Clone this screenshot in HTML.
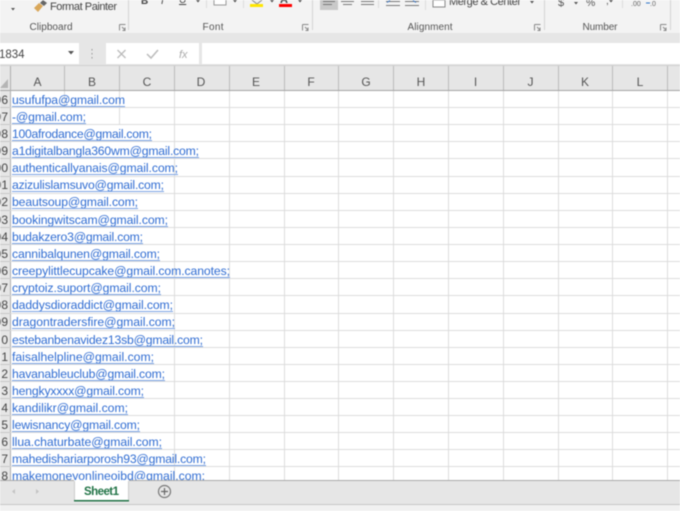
<!DOCTYPE html>
<html><head><meta charset="utf-8"><style>
html,body{margin:0;padding:0;width:680px;height:511px;overflow:hidden;background:#fff}
svg{display:block;filter:blur(.45px)}
text{font-family:"Liberation Sans",sans-serif}
.m{fill:#2f6cd2;font-size:12.2px}
.h{fill:#555;font-size:12px;text-anchor:middle}
.r{fill:#444;font-size:12px;text-anchor:end}
.l{fill:#555;font-size:10px;text-anchor:middle}
.u{stroke:#7ba3e4;stroke-width:1}
.g{stroke:#dcdcdc;stroke-width:1}
.t{stroke:#888;stroke-width:1;fill:none}
</style></head><body>
<svg xmlns="http://www.w3.org/2000/svg" width="680" height="511" viewBox="0 0 680 511">
<rect width="680" height="511" fill="#fff"/>
<!-- ribbon -->
<rect width="680" height="33" fill="#f3f3f3"/>
<rect y="33" width="680" height="32" fill="#e6e6e6"/>
<path d="M128.500 0V30M312.500 0V30M544.500 0V30M670.500 0V30" stroke="#d4d4d4"/>
<path d="M206.500 0V8M243.500 0V8M378.500 0V8M425.500 0V10M622.500 0V8" stroke="#dcdcdc"/>
<!-- clipboard -->
<path d="M11 8l4 0-2 2.500z" fill="#555"/>
<path d="M34 8l5-5 4 3-5 6z" fill="#d9a75a"/><path d="M40 3l3-3 4 3-3 3z" fill="#666"/>
<text x="50" y="10" font-size="11" fill="#444" textLength="67" lengthAdjust="spacing">Format Painter</text>
<text x="51" y="30" class="l" textLength="43" lengthAdjust="spacing">Clipboard</text>
<!-- launchers -->
<g class="t"><path d="M119.500 24.500h6M119.500 24.500v6M125 30l-3-3M125 27.500v3h-2.500"/><path d="M302.500 24.500h6M302.500 24.500v6M308 30l-3-3M308 27.500v3h-2.500"/><path d="M534.500 24.500h6M534.500 24.500v6M540 30l-3-3M540 27.500v3h-2.500"/><path d="M660.500 24.500h6M660.500 24.500v6M666 30l-3-3M666 27.500v3h-2.500"/></g>
<!-- font group -->
<text x="141" y="4" font-size="10" font-weight="bold" fill="#444">B</text>
<text x="161" y="4" font-size="10" font-style="italic" fill="#444">I</text>
<text x="179" y="3" font-size="10" text-decoration="underline" fill="#444">U</text>
<path d="M196 0l4 0-2 2.500zM233 0l4 0-2 2.500zM270 0l4 0-2 2.500zM298 0l4 0-2 2.500z" fill="#555"/>
<rect x="214" y="-4" width="12" height="9" fill="#fff" stroke="#999"/>
<path d="M252 0l5 4 5-4" stroke="#888" fill="#eee"/>
<rect x="250" y="4" width="13" height="3" fill="#ffe600"/>
<text x="280" y="3" font-size="11" font-weight="bold" fill="#444">A</text>
<rect x="279" y="4" width="13" height="3" fill="#f00"/>
<text x="213" y="30" class="l" textLength="21" lengthAdjust="spacing">Font</text>
<!-- alignment -->
<rect x="320" y="0" width="18" height="10" fill="#c9c9c9"/>
<path d="M323 1.500h12M323 4.500h9M341 1.500h13M343 4.500h9M361 1.500h13M361 4.500h13" stroke="#777"/>
<path d="M386 1.500h14M386 5.500h14M405 1.500h14M405 5.500h14" stroke="#777"/>
<path d="M387 2.500l3-2M416 2.500l-3-2" stroke="#3a78c8"/>
<rect x="433" y="0" width="12" height="7" fill="#fff" stroke="#888"/>
<text x="449" y="5" font-size="11" fill="#444" textLength="72" lengthAdjust="spacing">Merge &amp; Center</text>
<path d="M530 1l4 0-2 2.500z" fill="#555"/>
<text x="430" y="30" class="l" textLength="45" lengthAdjust="spacing">Alignment</text>
<!-- number -->
<text x="558" y="6" font-size="11" fill="#555">$</text>
<path d="M574 2l4 0-2 2.500zM609 0l4 0-2 2.500z" fill="#555"/>
<text x="586" y="6" font-size="10.500" fill="#555">%</text>
<text x="606" y="4" font-size="10" fill="#555">,</text>
<text x="631" y="6" font-size="7" fill="#666">.00</text>
<path d="M646 3h4" stroke="#2e75c8"/><text x="650" y="6" font-size="7" fill="#666">.0</text>
<text x="600" y="30" class="l" textLength="35" lengthAdjust="spacing">Number</text>
<!-- formula bar -->
<rect x="0" y="43" width="79" height="21" fill="#fff"/>
<rect x="106" y="43" width="93" height="21" fill="#fff"/>
<rect x="202" y="43" width="478" height="21" fill="#fff"/>
<text x="-1" y="58" font-size="11.500" fill="#444">1834</text>
<path d="M68 51h6l-3 3.500z" fill="#555"/>
<path d="M92 49v1.500M92 53v1.500M92 57v1.500" stroke="#999"/>
<path d="M117.500 50l8 8M125.500 50l-8 8" stroke="#bbb" stroke-width="1.300"/>
<path d="M147 54l4 4 7-8" stroke="#bbb" stroke-width="1.500" fill="none"/>
<text x="179" y="58" font-size="11" font-style="italic" fill="#aaa">fx</text>
<!-- column headers -->
<rect y="65" width="680" height="25" fill="#e6e6e6"/>
<path d="M0 65.500H680" stroke="#cfcfcf"/>
<rect y="90" width="10" height="390" fill="#e6e6e6"/>
<path d="M0 88H8V79z" fill="#b5b5b5"/>
<g class="h">
<text x="37.500" y="86">A</text><text x="92" y="86">B</text><text x="147" y="86">C</text><text x="201" y="86">D</text><text x="256" y="86">E</text><text x="311" y="86">F</text><text x="366" y="86">G</text><text x="421" y="86">H</text><text x="475.500" y="86">I</text><text x="530.500" y="86">J</text><text x="585" y="86">K</text><text x="640" y="86">L</text>
</g>
<path d="M64.500 66V90M119.500 66V90M174.500 66V90M229.500 66V90M284.500 66V90M338.500 66V90M393.500 66V90M448.500 66V90M503.500 66V90M558.500 66V90M612.500 66V90M667.500 66V90" stroke="#bcbcbc"/>
<path d="M0 90.500H680" stroke="#a4a4a4"/>
<path d="M10.500 66V480" stroke="#b0b0b0"/>
<!-- grid -->
<g class="g">
<path d="M10 107.500H680M10 124.500H680M10 141.500H680M10 158.500H680M10 176.500H680M10 193.500H680M10 210.500H680M10 227.500H680M10 244.500H680M10 261.500H680M10 278.500H680M10 295.500H680M10 313.500H680M10 330.500H680M10 347.500H680M10 364.500H680M10 381.500H680M10 398.500H680M10 415.500H680M10 432.500H680M10 449.500H680M10 466.500H680"/>
<path d="M174.500 91V480M229.500 91V480M284.500 91V480M338.500 91V480M393.500 91V480M448.500 91V480M503.500 91V480M558.500 91V480M612.500 91V480M667.500 91V480"/>
<path d="M64.500 91V107M119.500 91V124"/>
</g>
<path d="M0 107.500H10M0 124.500H10M0 141.500H10M0 158.500H10M0 176.500H10M0 193.500H10M0 210.500H10M0 227.500H10M0 244.500H10M0 261.500H10M0 278.500H10M0 295.500H10M0 313.500H10M0 330.500H10M0 347.500H10M0 364.500H10M0 381.500H10M0 398.500H10M0 415.500H10M0 432.500H10M0 449.500H10M0 466.500H10" stroke="#c8c8c8"/>
<!-- row numbers -->
<g class="r">
<text x="8" y="104">96</text><text x="8" y="121">97</text><text x="8" y="138">98</text><text x="8" y="155">99</text><text x="8" y="172">00</text><text x="8" y="189">01</text><text x="8" y="206">02</text><text x="8" y="224">03</text><text x="8" y="241">04</text><text x="8" y="258">05</text><text x="8" y="275">06</text><text x="8" y="292">07</text><text x="8" y="309">08</text><text x="8" y="326">09</text><text x="8" y="344">0</text><text x="8" y="361">1</text><text x="8" y="378">2</text><text x="8" y="395">3</text><text x="8" y="412">4</text><text x="8" y="429">5</text><text x="8" y="446">6</text><text x="8" y="463">7</text><text x="8" y="480">8</text>
</g>
<!-- emails -->
<g class="m">
<text x="12" y="104" textLength="113" lengthAdjust="spacing">usufufpa@gmail.com</text>
<text x="12" y="121" textLength="74" lengthAdjust="spacing">-@gmail.com;</text>
<text x="12" y="138" textLength="140" lengthAdjust="spacing">100afrodance@gmail.com;</text>
<text x="12" y="155" textLength="187" lengthAdjust="spacing">a1digitalbangla360wm@gmail.com;</text>
<text x="12" y="172" textLength="166" lengthAdjust="spacing">authenticallyanais@gmail.com;</text>
<text x="12" y="189" textLength="152" lengthAdjust="spacing">azizulislamsuvo@gmail.com;</text>
<text x="12" y="206" textLength="126" lengthAdjust="spacing">beautsoup@gmail.com;</text>
<text x="12" y="224" textLength="156" lengthAdjust="spacing">bookingwitscam@gmail.com;</text>
<text x="12" y="241" textLength="131" lengthAdjust="spacing">budakzero3@gmail.com;</text>
<text x="12" y="258" textLength="148" lengthAdjust="spacing">cannibalqunen@gmail.com;</text>
<text x="12" y="275" textLength="218" lengthAdjust="spacing">creepylittlecupcake@gmail.com.canotes;</text>
<text x="12" y="292" textLength="149" lengthAdjust="spacing">cryptoiz.suport@gmail.com;</text>
<text x="12" y="309" textLength="161" lengthAdjust="spacing">daddysdioraddict@gmail.com;</text>
<text x="12" y="326" textLength="163" lengthAdjust="spacing">dragontradersfire@gmail.com;</text>
<text x="12" y="344" textLength="191" lengthAdjust="spacing">estebanbenavidez13sb@gmail.com;</text>
<text x="12" y="361" textLength="142" lengthAdjust="spacing">faisalhelpline@gmail.com;</text>
<text x="12" y="378" textLength="153" lengthAdjust="spacing">havanableuclub@gmail.com;</text>
<text x="12" y="395" textLength="132" lengthAdjust="spacing">hengkyxxxx@gmail.com;</text>
<text x="12" y="412" textLength="116" lengthAdjust="spacing">kandilikr@gmail.com;</text>
<text x="12" y="429" textLength="128" lengthAdjust="spacing">lewisnancy@gmail.com;</text>
<text x="12" y="446" textLength="150" lengthAdjust="spacing">llua.chaturbate@gmail.com;</text>
<text x="12" y="463" textLength="194" lengthAdjust="spacing">mahedishariarporosh93@gmail.com;</text>
<text x="12" y="480" textLength="193" lengthAdjust="spacing">makemoneyonlineoibd@gmail.com;</text>
</g>
<!-- underlines -->
<g class="u">
<path d="M12 106.500H125M12 123.500H86M12 140.500H152M12 157.500H199M12 174.500H178M12 191.500H164M12 208.500H138M12 226.500H168M12 243.500H143M12 260.500H160M12 277.500H230M12 294.500H161M12 311.500H173M12 328.500H175M12 346.500H203M12 363.500H154M12 380.500H165M12 397.500H144M12 414.500H128M12 431.500H140M12 448.500H162M12 465.500H206"/>
</g>
<!-- sheet tab bar -->
<rect y="480" width="680" height="24" fill="#e6e6e6"/>
<rect y="504" width="680" height="7" fill="#f1f1f1"/>
<path d="M0 480.500H680" stroke="#aaa"/>
<path d="M0 504.500H680" stroke="#c8c8c8"/>
<path d="M15 489v5l-3-2.500zM36 489v5l3-2.500z" fill="#c4c4c4"/>
<rect x="74" y="480" width="55" height="21" fill="#fff"/>
<path d="M74.500 481V500M128.500 481V500" stroke="#ccc"/>
<rect x="74" y="500" width="55" height="1.500" fill="#217346"/>
<text x="84" y="495" font-size="11.500" font-weight="bold" fill="#217346" textLength="35" lengthAdjust="spacing">Sheet1</text>
<circle cx="164.500" cy="491.500" r="6" fill="none" stroke="#777" stroke-width="1.200"/>
<path d="M161 491.500h7M164.500 488v7" stroke="#666" stroke-width="1.200"/>
</svg>
</body></html>
